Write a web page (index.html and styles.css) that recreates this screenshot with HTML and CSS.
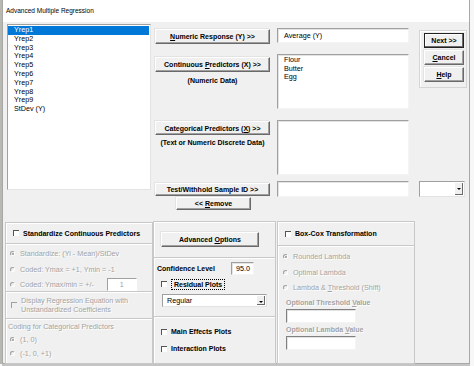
FILE: index.html
```html
<!DOCTYPE html>
<html lang="en">
<head>
  <meta charset="UTF-8">
  <title>Advanced Multiple Regression</title>
  <link rel="stylesheet" href="styles.css">
</head>
<body>
  <div class="window">
    <div class="titlebar">Advanced Multiple Regression</div>
    <div class="client">

      <div class="top">
        <ul class="listbox">
          <li class="sel">Yrep1</li>
          <li>Yrep2</li>
          <li>Yrep3</li>
          <li>Yrep4</li>
          <li>Yrep5</li>
          <li>Yrep6</li>
          <li>Yrep7</li>
          <li>Yrep8</li>
          <li>Yrep9</li>
          <li>StDev (Y)</li>
        </ul>

        <div class="col-buttons">
          <div class="btn btn-numeric"><span><u>N</u>umeric Response (Y) &gt;&gt;</span></div>
          <div class="btn btn-cont"><span>Continuous <u>P</u>redictors (X) &gt;&gt;</span></div>
          <div class="note note-cont">(Numeric Data)</div>
          <div class="btn btn-cat"><span>Categorical Predictors (<u>X</u>) &gt;&gt;</span></div>
          <div class="note">(Text or Numeric Discrete Data)</div>
          <div class="btn btn-test"><span>Test/Withhold Sample ID &gt;&gt;</span></div>
          <div class="btn btn-remove"><span>&lt;&lt; <u>R</u>emove</span></div>
        </div>

        <div class="col-fields">
          <div class="field f-resp">Average (Y)</div>
          <div class="field f-cont">Flour<br>Butter<br>Egg</div>
          <div class="field f-cat"></div>
          <div class="field f-test"></div>
        </div>

        <div class="col-right">
          <div class="cmd-group">
            <div class="btn cmd default"><span>Next &gt;&gt;</span></div>
            <div class="btn cmd"><span><u>C</u>ancel</span></div>
            <div class="btn cmd"><span><u>H</u>elp</span></div>
          </div>
          <div class="combo"><span class="drop"></span></div>
        </div>
      </div>

      <div class="bottom">
        <!-- left: standardize / coding -->
        <div class="panel-col left-col">
          <div class="frame fa head">
            <span class="check"></span><b>Standardize Continuous Predictors</b>
          </div>
          <div class="frame fb">
            <div class="opt dis"><span class="radio on"></span><span>Standardize: (Yi - Mean)/StDev</span></div>
            <div class="opt dis"><span class="radio"></span><span>Coded: Ymax = +1, Ymin = -1</span></div>
            <div class="opt dis"><span class="radio"></span><span>Coded: Ymax/min = +/-</span><span class="small-input">1</span></div>
          </div>
          <div class="frame fc dis">
            <span class="check"></span>
            <span>Display Regression Equation with<br>Unstandardized Coefficients</span>
          </div>
          <div class="frame fd">
            <div class="caption dis">Coding for Categorical Predictors</div>
            <div class="opt dis"><span class="radio on"></span><span>(1, 0)</span></div>
            <div class="opt dis"><span class="radio"></span><span>(-1, 0, +1)</span></div>
          </div>
        </div>

        <!-- middle: options / plots -->
        <div class="panel-col mid-col">
          <div class="frame fe">
            <div class="btn btn-adv"><span>Advanced <u>O</u>ptions</span></div>
          </div>
          <div class="frame ff">
            <div class="conf-row">
              <b>Confidence Level</b>
              <span class="field conf-input">95.0</span>
            </div>
            <div class="opt"><span class="check"></span><b class="focus">Residual Plots</b></div>
            <div class="select">Regular<span class="drop"></span></div>
          </div>
          <div class="frame fg">
            <div class="opt"><span class="check"></span><b>Main Effects Plots</b></div>
            <div class="opt"><span class="check"></span><b>Interaction Plots</b></div>
          </div>
        </div>

        <!-- right: box-cox -->
        <div class="panel-col right-col">
          <div class="frame fh head">
            <span class="check"></span><b>Box-Cox Transformation</b>
          </div>
          <div class="frame fi">
            <div class="opt dis"><span class="radio on"></span><span>Rounded Lambda</span></div>
            <div class="opt dis"><span class="radio"></span><span>Optimal Lambda</span></div>
            <div class="opt dis"><span class="radio"></span><span>Lambda &amp; <u>T</u>hreshold (Shift)</span></div>
            <div class="caption dis">Optional Threshold <u>V</u>alue</div>
            <div class="field opt-input"></div>
            <div class="caption dis">Optional Lambda <u>V</u>alue</div>
            <div class="field opt-input"></div>
          </div>
        </div>
      </div>

    </div>
  </div>
</body>
</html>
```

FILE: styles.css
```css
* {
  box-sizing: border-box;
}

body {
  margin: 0;
  width: 474px;
  height: 366px;
  overflow: hidden;
  background-color: #f7f7f7;
  font-family: "Liberation Sans", Arial, sans-serif;
  font-size: 7.2px;
  color: #000;
}

b {
  font-size: 7px;
}

.window {
  width: 468px;
  height: 364px;
  margin-left: 2px;
  border-left: 1px solid #a8a8a8;
  border-right: 1px solid #a8a8a8;
  border-bottom: 1px solid #a8a8a8;
  background-color: #f0f0f0;
  box-shadow: -2px 0 0 #b8b8b0, 0 2px 0 #c4c4c4;
}

.titlebar {
  height: 22px;
  line-height: 21px;
  padding-left: 3px;
  font-size: 6.5px;
  background-color: #fff;
}

.client {
  padding: 2px 0 0 4px;
}

/* top half */
.top {
  display: flex;
  align-items: flex-start;
}

.listbox {
  list-style: none;
  margin: 0;
  padding: 1px 1px 0 0;
  width: 144px;
  height: 166px;
  background-color: #fff;
  border: 1px solid;
  border-color: #a0a0a0 #e3e3e3 #e3e3e3 #a0a0a0;
}

.listbox li {
  height: 8.8px;
  line-height: 8.8px;
  padding-left: 6px;
}

.listbox li.sel {
  background-color: #0078d7;
  color: #fff;
}

.btn {
  display: flex;
  align-items: center;
  justify-content: center;
  font-weight: bold;
  font-size: 7px;
  background-color: #f0f0f0;
  border: 1px solid;
  border-color: #fff #696969 #696969 #fff;
  box-shadow: inset -1px -1px #a0a0a0, -1px -1px #e3e3e3;
  white-space: nowrap;
}

.col-buttons {
  display: flex;
  flex-direction: column;
  width: 115px;
  margin-left: 4px;
}

.btn-numeric { margin-top: 5px; height: 15px; }
.btn-cont { margin-top: 13px; height: 15px; }
.btn-cat { margin-top: 35px; height: 14px; }
.btn-test { margin-top: 35px; height: 13px; }
.btn-remove { margin: 1px 0 0 21px; width: 75px; height: 13px; }

.note {
  margin-top: 3px;
  height: 10px;
  line-height: 10px;
  text-align: center;
  font-weight: bold;
  font-size: 7px;
}

.note-cont {
  margin-top: 4px;
}

.field {
  background-color: #fff;
  border: 1px solid;
  border-color: #a0a0a0 #f4f4f4 #f4f4f4 #a0a0a0;
  box-shadow: inset 1px 1px #e3e3e3;
}

.col-fields {
  display: flex;
  flex-direction: column;
  width: 132px;
  margin-left: 7px;
}

.f-resp {
  margin-top: 4px;
  height: 15px;
  line-height: 13px;
  padding-left: 6px;
}

.f-cont {
  margin-top: 11px;
  height: 55px;
  padding: 1px 0 0 6px;
  line-height: 8.6px;
}

.f-cat { margin-top: 11px; height: 55px; }
.f-test { margin-top: 6px; height: 16px; }

.col-right {
  display: flex;
  flex-direction: column;
  width: 48px;
  margin-left: 10px;
}

.cmd-group {
  margin-top: 6px;
  height: 58px;
  padding: 2px 0 0 4px;
  border: 1px solid #d5d5d5;
  box-shadow: inset 1px 1px #fff;
}

.cmd {
  width: 40px;
  height: 15px;
  margin-bottom: 2px;
}

.cmd:last-child {
  margin-top: 1px;
}

.cmd.default {
  border: 1px solid #222;
  box-shadow: inset -1px -1px #696969, inset 1px 1px #fff;
}

.combo {
  position: relative;
  margin-top: 93px;
  width: 46px;
  height: 16px;
  background-color: #fff;
  border: 1px solid;
  border-color: #a0a0a0 #e3e3e3 #e3e3e3 #a0a0a0;
}

.drop {
  position: absolute;
  right: 1px;
  top: 1px;
  bottom: 1px;
  width: 8px;
  background-color: #f0f0f0;
  border-right: 1px solid #696969;
  border-bottom: 1px solid #696969;
}

.drop::after {
  content: "";
  position: absolute;
  left: 2px;
  top: 5px;
  border-left: 2px solid transparent;
  border-right: 2px solid transparent;
  border-top: 2px solid #000;
}

/* bottom half */
.bottom {
  display: flex;
  align-items: flex-start;
  margin: 11px 0 0 -2px;
}

.panel-col {
  display: flex;
  flex-direction: column;
}

.frame {
  border: 1px solid #c8c8c8;
  box-shadow: inset 1px 1px #fff;
}

.frame + .frame {
  margin-top: -1px;
}

.left-col { width: 148px; margin-top: 1px; }
.mid-col { width: 123px; }
.right-col { width: 138px; margin-left: 1px; }

.head {
  display: flex;
  align-items: center;
  padding-left: 7px;
}

.check {
  display: inline-block;
  flex: none;
  width: 6px;
  height: 6px;
  margin-right: 4px;
  background-color: #fff;
  border-top: 1px solid #555;
  border-left: 1px solid #555;
}

.radio {
  display: inline-block;
  position: relative;
  flex: none;
  width: 5px;
  height: 5px;
  margin-right: 5px;
  border-radius: 50%;
  border: 1px solid;
  border-color: #a0a0a0 #fff #fff #a0a0a0;
}

.radio.on::after {
  content: "";
  position: absolute;
  left: 1px;
  top: 1px;
  width: 1.5px;
  height: 1.5px;
  border-radius: 50%;
  background-color: #a0a0a0;
}

.dis {
  color: #a3a3a3;
  text-shadow: 1px 1px 0 #fff;
}

.dis .check {
  border-color: #a0a0a0;
  background-color: transparent;
}

.opt {
  display: flex;
  align-items: center;
  height: 15.5px;
  padding-left: 4px;
  white-space: nowrap;
}

.fa { height: 22px; }

.fb {
  height: 49px;
  padding-top: 2px;
}

.small-input {
  margin-left: 13px;
  width: 30px;
  height: 13px;
  line-height: 12px;
  text-align: center;
  color: #a0a0a0;
  background-color: #fff;
  border: 1px solid;
  border-color: #a0a0a0 #fff #fff #a0a0a0;
  text-shadow: none;
}

.fc {
  display: flex;
  align-items: center;
  height: 28px;
  padding-left: 5px;
  line-height: 9px;
}

.fd {
  height: 46px;
  padding-top: 3px;
}

.fd .caption {
  padding-left: 2px;
  height: 10px;
  line-height: 10px;
}

.fd .opt {
  height: 13px;
  margin-top: 1px;
}

.fe {
  height: 37px;
  padding: 10px 0 0 7px;
}

.btn-adv {
  width: 98px;
  height: 15px;
}

.ff {
  height: 60px;
  padding: 4px 0 0 3px;
}

.conf-row {
  display: flex;
  align-items: center;
  justify-content: space-between;
  width: 97px;
  height: 13px;
}

.conf-input {
  width: 23px;
  height: 13px;
  line-height: 11px;
  padding-left: 4px;
}

.ff .opt {
  height: 18px;
  padding-left: 4px;
}

.focus {
  padding: 1px 2px;
  border: 1px dotted #000;
}

.select {
  position: relative;
  width: 105px;
  height: 13px;
  margin: 1px 0 0 5px;
  line-height: 11px;
  padding-left: 4px;
  background-color: #fff;
  border: 1px solid;
  border-color: #a0a0a0 #e3e3e3 #e3e3e3 #a0a0a0;
}

.fg {
  height: 48px;
  padding-top: 6px;
}

.fg .opt {
  height: 17px;
  padding-left: 7px;
}

.fh { height: 25px; }

.fi {
  height: 119px;
  padding: 3px 0 0 5px;
}

.fi .opt {
  padding-left: 0;
}

.fi .caption {
  margin-top: 2px;
  padding-left: 3px;
  height: 10px;
  line-height: 10px;
  font-weight: bold;
  font-size: 7px;
}

.opt-input {
  margin: 1px 0 0 3px;
  width: 70px;
  height: 14px;
  border-color: #808080 #f4f4f4 #f4f4f4 #808080;
}
```
